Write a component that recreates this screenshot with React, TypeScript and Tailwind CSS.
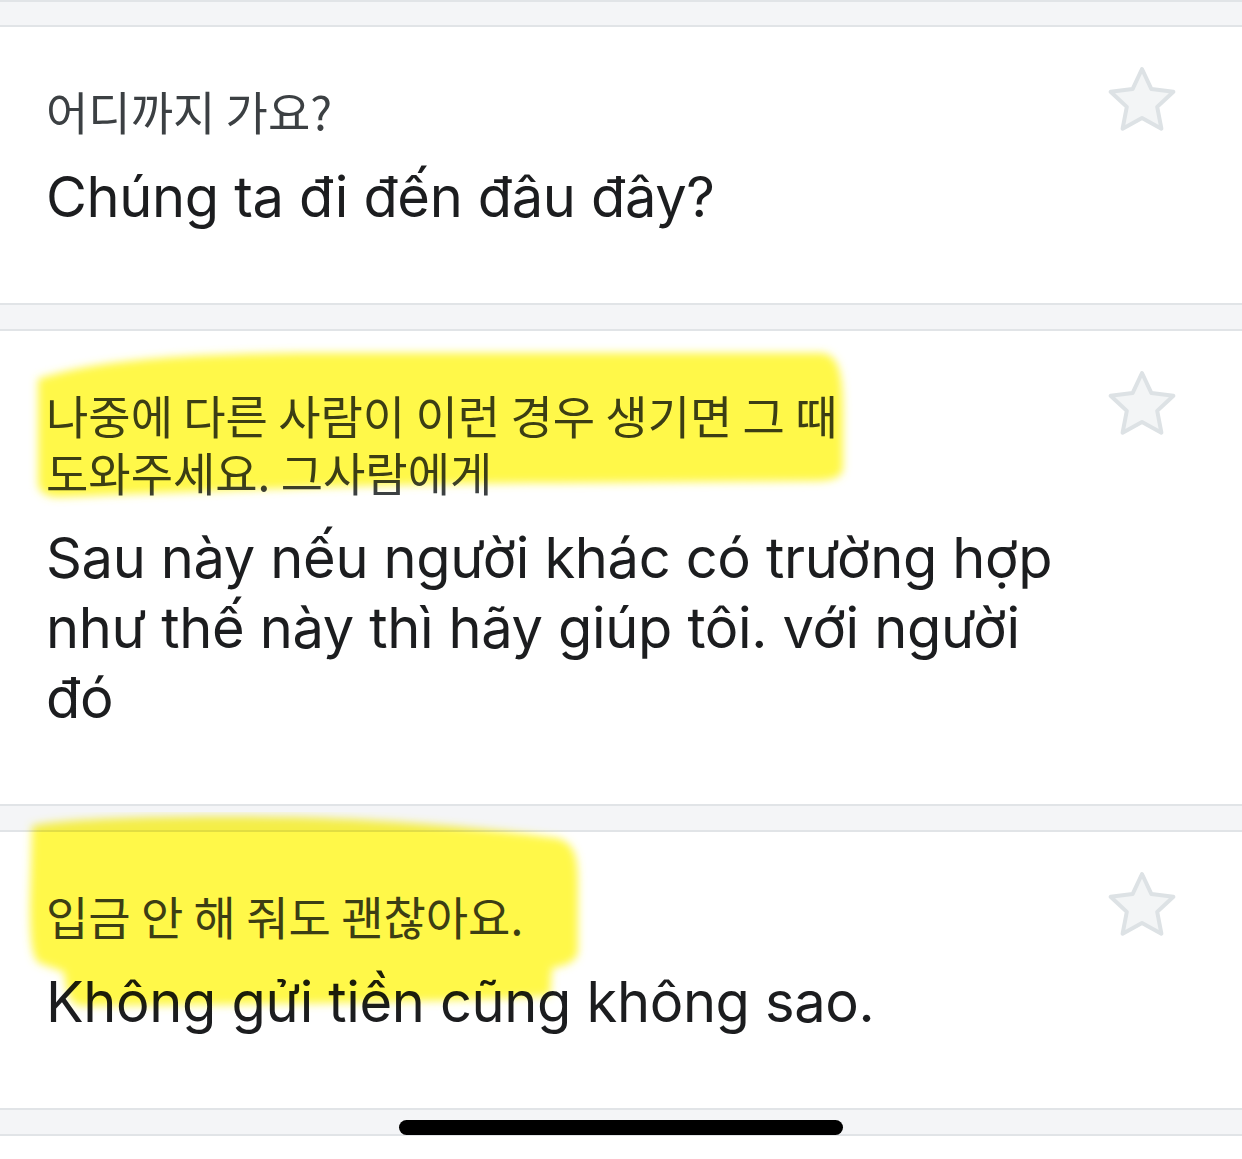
const KO = '"Noto Sans CJK KR", "Noto Sans", sans-serif';
const VI = 'Inter, "Noto Sans", sans-serif';

const Star = () => (
  <svg width="72" height="70" viewBox="0 0 72 70" className="block">
    <polygon
      points="36,4 45.4,24.1 67.4,26.8 51.2,41.9 55.4,63.7 36,53 16.6,63.7 20.8,41.9 4.6,26.8 26.6,24.1"
      fill="#f3f5f6"
      stroke="#dde2e5"
      strokeWidth="4"
      strokeLinejoin="round"
    />
  </svg>
);

const Gap = () => (
  <div className="h-[28px] bg-[#f4f5f7] border-y-2 border-[#e1e4e7]" />
);

type Item = {
  ko: string[];
  vi: string[];
  highlight?: React.ReactNode;
};

const Card = ({ ko, vi, highlight }: Item) => (
  <div className="relative bg-white flex">
    <div className="flex-1 pl-[46px] pt-[55px] pb-[71px]">
      <p className="text-[46px] leading-[57px] text-[#3c4043]" style={{ fontFamily: KO }}>
        {ko.map((l, i) => (
          <span key={i} className="block">
            {l}
          </span>
        ))}
      </p>
      <p className="mt-[23px] text-[56px] leading-[70px] tracking-[-0.35px] text-[#1c1d1f]" style={{ fontFamily: VI }}>
        {vi.map((l, i) => (
          <span key={i} className="block">
            {l}
          </span>
        ))}
      </p>
    </div>
    <div className="pt-[38px] pr-[64px]">
      <Star />
    </div>
    {highlight}
  </div>
);

const HighlightA = () => (
  <svg className="absolute left-0 top-[0px] pointer-events-none mix-blend-multiply" width="900" height="200" viewBox="0 0 900 200">
    <defs>
      <filter id="blurA" x="-10%" y="-20%" width="120%" height="140%">
        <feGaussianBlur stdDeviation="4" />
      </filter>
    </defs>
    <path
      d="M38 48 C 90 32, 150 24, 300 22 L 822 22 C 838 24, 843 40, 843 80 L 843 138 C 841 148, 830 150, 810 150 L 560 152 C 400 152, 200 160, 60 166 C 44 166, 38 160, 38 150 Z"
      fill="#fff84a"
      filter="url(#blurA)"
    />
  </svg>
);

const HighlightB = () => (
  <svg className="absolute left-0 top-[-20px] pointer-events-none mix-blend-multiply" width="620" height="220" viewBox="0 0 620 220">
    <defs>
      <filter id="blurB" x="-10%" y="-20%" width="120%" height="140%">
        <feGaussianBlur stdDeviation="4" />
      </filter>
    </defs>
    <path
      d="M32 14 C 60 6, 200 2, 320 6 C 420 10, 500 18, 556 26 C 574 30, 578 44, 578 70 L 578 140 C 576 150, 565 154, 552 156 L 550 184 C 450 190, 300 192, 80 194 C 70 192, 66 180, 64 160 L 42 152 C 32 150, 30 130, 30 90 Z"
      fill="#fff84a"
      filter="url(#blurB)"
    />
  </svg>
);

export default function App() {
  return (
    <div className="relative min-h-[1159px] bg-white">
      <div className="h-[27px] bg-[#f4f5f7] border-y-2 border-[#e1e4e7]" />
      <Card ko={["어디까지 가요?"]} vi={["Chúng ta đi đến đâu đây?"]} />
      <Gap />
      <Card
        ko={["나중에 다른 사람이 이런 경우 생기면 그 때", "도와주세요. 그사람에게"]}
        vi={["Sau này nếu người khác có trường hợp", "như thế này thì hãy giúp tôi. với người", "đó"]}
        highlight={<HighlightA />}
      />
      <Gap />
      <Card
        ko={["입금 안 해 줘도 괜찮아요."]}
        vi={["Không gửi tiền cũng không sao."]}
        highlight={<HighlightB />}
      />
      <Gap />
      <div className="absolute left-[399px] top-[1120px] w-[444px] h-[15px] rounded-full bg-black" />
    </div>
  );
}
